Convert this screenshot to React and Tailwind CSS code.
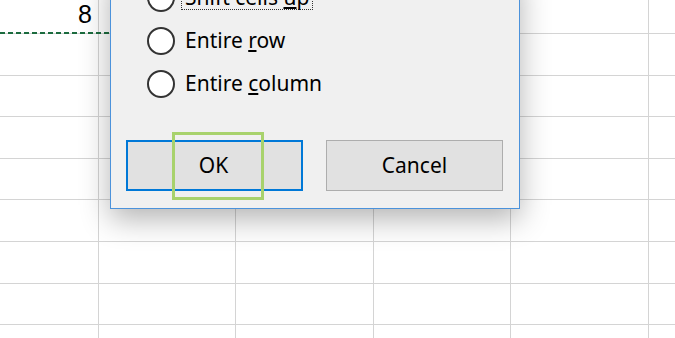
import React from "react";

const rowHeights = [34, 42, 41, 42, 41, 42, 42, 41, 40];
const colWidths = [99, 137, 138, 137, 138];

// Plain unchecked Win10 style radio
const Radio = () => (
  <span className="w-[28px] h-[28px] rounded-full border-2 border-[#333333] bg-white shrink-0" />
);

const Sheet = () => (
  <div className="flex flex-col">
    {rowHeights.map((h, r) => (
      <div key={r} className="flex" style={{ height: h }}>
        {colWidths.map((w, c) => (
          <div
            key={c}
            className="border-r border-b border-[#d4d4d4] flex items-end justify-end shrink-0"
            style={{ width: w }}
          >
            {r === 0 && c === 0 && (
              <span className="font-['Liberation_Sans',sans-serif] text-[25px] leading-none text-black pr-[6px] pb-[6px]">
                8
              </span>
            )}
          </div>
        ))}
        <div className="flex-1 border-b border-[#d4d4d4]" />
      </div>
    ))}
  </div>
);

export default function App() {
  return (
    <div className="relative w-[675px] h-[338px] overflow-hidden bg-white font-['Noto_Sans',sans-serif]">
      <Sheet />

      {/* copy marquee */}
      <svg className="absolute left-0 top-[32px]" width="112" height="2">
        <line x1="0" y1="1" x2="112" y2="1" stroke="#1b6b3e" strokeWidth="2" strokeDasharray="5 3" />
      </svg>

      {/* Delete dialog */}
      <div className="absolute left-[110px] top-[-30px] w-[410px] h-[239px] bg-[#f0f0f0] border border-[#4b92db] shadow-[0_10px_28px_rgba(0,0,0,0.3)] flex flex-col">
        <div className="pt-[5px] pl-[36px] flex flex-col text-[21px] text-black">
          <div className="h-[43px] flex items-center gap-[10px]">
            <Radio />
            <span className="leading-none px-[3px] py-[1px] -ml-[4px] border border-dotted border-[#333333]">
              Shift cells <span className="underline underline-offset-2">u</span>p
            </span>
          </div>
          <div className="h-[43px] flex items-center gap-[10px]">
            <Radio />
            <span className="leading-none">
              Entire <span className="underline underline-offset-2">r</span>ow
            </span>
          </div>
          <div className="h-[43px] flex items-center gap-[10px]">
            <Radio />
            <span className="leading-none">
              Entire <span className="underline underline-offset-2">c</span>olumn
            </span>
          </div>
        </div>

        <div className="mt-[35px] px-[15px] flex gap-[23px] text-[21px] text-black">
          <button className="relative w-[177px] h-[51px] bg-[#e1e1e1] border-2 border-[#0078d7] flex items-center justify-center">
            <span className="ml-[-2px]">OK</span>
            <span className="absolute left-[44px] top-[-10px] w-[92px] h-[68px] border-[3px] border-[#a8d26c]" />
          </button>
          <button className="w-[177px] h-[51px] bg-[#e1e1e1] border border-[#adadad] flex items-center justify-center">
            Cancel
          </button>
        </div>
      </div>
    </div>
  );
}
